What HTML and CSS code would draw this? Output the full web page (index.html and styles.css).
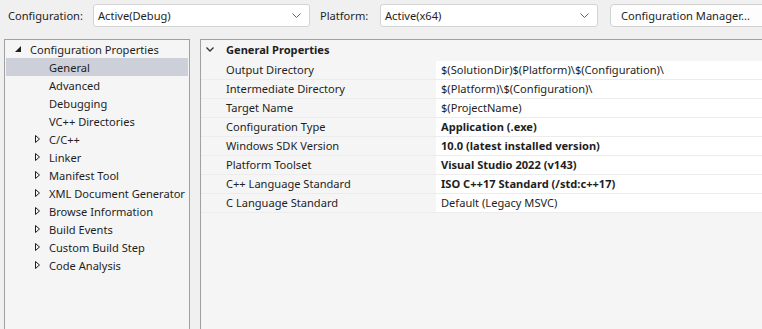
FILE: index.html
```html
<!DOCTYPE html>
<html lang="en">
<head>
    <meta charset="UTF-8">
    <title>Property Pages</title>
    <link rel="stylesheet" href="styles.css">
</head>
<body>
    <!-- Top bar -->
    <div class="toolbar">
        <span class="tb-label">Configuration:</span>
        <div class="combo combo-config">
            <span>Active(Debug)</span>
            <svg class="chev" width="9" height="5" viewBox="0 0 9 5"><path d="M0.5 0.5 L4.5 4.5 L8.5 0.5" fill="none" stroke="#606060" stroke-width="1"/></svg>
        </div>
        <span class="tb-label tb-platform">Platform:</span>
        <div class="combo combo-platform">
            <span>Active(x64)</span>
            <svg class="chev" width="9" height="5" viewBox="0 0 9 5"><path d="M0.5 0.5 L4.5 4.5 L8.5 0.5" fill="none" stroke="#606060" stroke-width="1"/></svg>
        </div>
        <div class="btn">Configuration Manager...</div>
    </div>

    <div class="main">
        <!-- Tree -->
        <div class="tree">
            <div class="node">
                <svg class="tri" width="6" height="6" viewBox="0 0 6 6"><path d="M6 0 L6 6 L0 6 Z" fill="#1e1e1e"/></svg>
                <span>Configuration Properties</span>
            </div>
            <div class="node child selected"><span class="spacer"></span><span>General</span></div>
            <div class="node child"><span class="spacer"></span><span>Advanced</span></div>
            <div class="node child"><span class="spacer"></span><span>Debugging</span></div>
            <div class="node child"><span class="spacer"></span><span>VC++ Directories</span></div>
            <div class="node child"><svg class="tri" width="5" height="8" viewBox="0 0 5 8"><path d="M0.5 0.5 L4.5 4 L0.5 7.5 Z" fill="none" stroke="#1e1e1e"/></svg><span>C/C++</span></div>
            <div class="node child"><svg class="tri" width="5" height="8" viewBox="0 0 5 8"><path d="M0.5 0.5 L4.5 4 L0.5 7.5 Z" fill="none" stroke="#1e1e1e"/></svg><span>Linker</span></div>
            <div class="node child"><svg class="tri" width="5" height="8" viewBox="0 0 5 8"><path d="M0.5 0.5 L4.5 4 L0.5 7.5 Z" fill="none" stroke="#1e1e1e"/></svg><span>Manifest Tool</span></div>
            <div class="node child"><svg class="tri" width="5" height="8" viewBox="0 0 5 8"><path d="M0.5 0.5 L4.5 4 L0.5 7.5 Z" fill="none" stroke="#1e1e1e"/></svg><span>XML Document Generator</span></div>
            <div class="node child"><svg class="tri" width="5" height="8" viewBox="0 0 5 8"><path d="M0.5 0.5 L4.5 4 L0.5 7.5 Z" fill="none" stroke="#1e1e1e"/></svg><span>Browse Information</span></div>
            <div class="node child"><svg class="tri" width="5" height="8" viewBox="0 0 5 8"><path d="M0.5 0.5 L4.5 4 L0.5 7.5 Z" fill="none" stroke="#1e1e1e"/></svg><span>Build Events</span></div>
            <div class="node child"><svg class="tri" width="5" height="8" viewBox="0 0 5 8"><path d="M0.5 0.5 L4.5 4 L0.5 7.5 Z" fill="none" stroke="#1e1e1e"/></svg><span>Custom Build Step</span></div>
            <div class="node child"><svg class="tri" width="5" height="8" viewBox="0 0 5 8"><path d="M0.5 0.5 L4.5 4 L0.5 7.5 Z" fill="none" stroke="#1e1e1e"/></svg><span>Code Analysis</span></div>
        </div>

        <!-- Property grid -->
        <div class="grid">
            <div class="grid-head">
                <svg class="head-chev" width="8" height="5" viewBox="0 0 8 5"><path d="M0.5 0.5 L4 4 L7.5 0.5" fill="none" stroke="#333" stroke-width="1.3"/></svg>
                <span>General Properties</span>
            </div>
            <div class="rows">
                <div class="row"><div class="name">Output Directory</div><div class="value">$(SolutionDir)$(Platform)\$(Configuration)\</div></div>
                <div class="row"><div class="name">Intermediate Directory</div><div class="value">$(Platform)\$(Configuration)\</div></div>
                <div class="row"><div class="name">Target Name</div><div class="value">$(ProjectName)</div></div>
                <div class="row"><div class="name">Configuration Type</div><div class="value bold">Application (.exe)</div></div>
                <div class="row"><div class="name">Windows SDK Version</div><div class="value bold">10.0 (latest installed version)</div></div>
                <div class="row"><div class="name">Platform Toolset</div><div class="value bold">Visual Studio 2022 (v143)</div></div>
                <div class="row"><div class="name">C++ Language Standard</div><div class="value bold">ISO C++17 Standard (/std:c++17)</div></div>
                <div class="row"><div class="name">C Language Standard</div><div class="value">Default (Legacy MSVC)</div></div>
            </div>
        </div>
    </div>
</body>
</html>
```

FILE: styles.css
```css
* {
    box-sizing: border-box;
    margin: 0;
    padding: 0;
}

html, body {
    height: 100%;
    overflow: hidden;
}

body {
    font-family: "Noto Sans", "DejaVu Sans", sans-serif;
    font-size: 11.1px;
    color: #1e1e1e;
    background: #f0f0f0;
}

/* Top bar */
.toolbar {
    display: flex;
    align-items: center;
    height: 31px;
    padding: 0 0 0 8px;
    white-space: nowrap;
    overflow: hidden;
}

.toolbar > * {
    flex: 0 0 auto;
}

.tb-label {
    width: 85px;
}

.tb-platform {
    width: 60px;
    margin-left: 10px;
}

.combo {
    display: flex;
    align-items: center;
    justify-content: space-between;
    height: 23px;
    background: #fff;
    border: 1px solid #d4d4d4;
    border-radius: 3px;
    padding: 0 8px 0 4px;
}

.combo-config {
    width: 217px;
}

.combo-platform {
    width: 218px;
}

.btn {
    margin-left: 12px;
    height: 23px;
    width: 170px;
    display: flex;
    align-items: center;
    padding-left: 10px;
    background: #fdfdfd;
    border: 1px solid #d0d0d0;
    border-radius: 4px;
}

/* Main area */
.main {
    display: flex;
    gap: 10px;
    padding: 8px 0 0 4px;
    height: calc(100% - 31px);
}

.tree {
    flex: 0 0 186px;
    min-width: 0;
    overflow: hidden;
    background: #f5f5f5;
    border: 1px solid #a0a0a0;
    border-bottom: none;
    padding: 0 1px;
}

.node {
    display: flex;
    align-items: center;
    height: 18px;
    white-space: nowrap;
}

.node .tri {
    flex: 0 0 auto;
    margin: 0 9px;
}

.node.child {
    padding-left: 20px;
}

.node .spacer {
    flex: 0 0 23px;
}

.node.selected {
    background: #cdcfd9;
}

.grid {
    flex: 1;
    min-width: 0;
    background: #f5f5f5;
    border: 1px solid #a0a0a0;
    border-right: none;
    border-bottom: none;
    margin-right: -10px;
}

.grid-head {
    display: flex;
    align-items: center;
    height: 19px;
    font-weight: bold;
}

.head-chev {
    margin: 0 12px 0 5px;
}

.rows {
    margin-top: 2px;
}

.row {
    display: flex;
    height: 19px;
    border-bottom: 1px solid #ececec;
    white-space: nowrap;
}

.name {
    width: 215px;
    padding-left: 4px;
    margin-left: 21px;
    line-height: 18px;
    background: #f5f5f5;
    border-right: 1px solid #fff;
}

.value {
    flex: 1;
    padding-left: 4px;
    line-height: 18px;
    background: #fff;
}

.bold {
    font-weight: bold;
}
```
